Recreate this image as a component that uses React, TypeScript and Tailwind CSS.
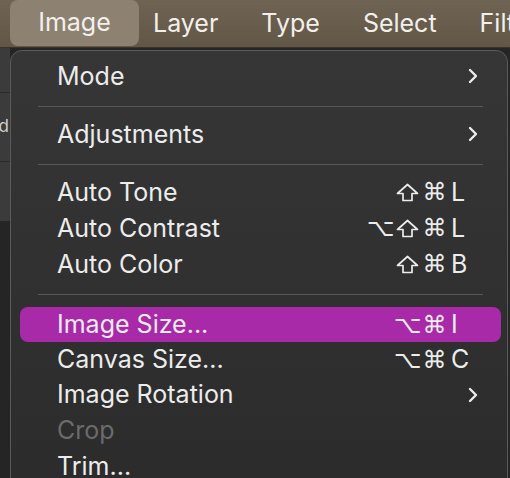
import React from "react";

type Row = {
  label?: string;
  mods?: string[];
  keyChar?: string;
  submenu?: boolean;
  disabled?: boolean;
  active?: boolean;
  sep?: boolean;
  h: string;
};

const rows: Row[] = [
  { label: "Mode", submenu: true, h: "h-[36px]" },
  { sep: true, h: "h-[22px]" },
  { label: "Adjustments", submenu: true, h: "h-[36px]" },
  { sep: true, h: "h-[22px]" },
  { label: "Auto Tone", mods: ["⇧", "⌘"], keyChar: "L", h: "h-[36px]" },
  { label: "Auto Contrast", mods: ["⌥", "⇧", "⌘"], keyChar: "L", h: "h-[36px]" },
  { label: "Auto Color", mods: ["⇧", "⌘"], keyChar: "B", h: "h-[36px]" },
  { sep: true, h: "h-[25px]" },
  { label: "Image Size...", mods: ["⌥", "⌘"], keyChar: "I", active: true, h: "h-[35px]" },
  { label: "Canvas Size...", mods: ["⌥", "⌘"], keyChar: "C", h: "h-[35px]" },
  { label: "Image Rotation", submenu: true, h: "h-[35px]" },
  { label: "Crop", disabled: true, h: "h-[36px]" },
  { label: "Trim...", h: "h-[36px]" },
];

function Chevron() {
  return (
    <svg width="10" height="16" viewBox="0 0 10 16" className="mr-[23px]">
      <path d="M2 2 L8 8 L2 14" fill="none" stroke="#ececec" strokeWidth="2.4" strokeLinecap="round" strokeLinejoin="round" />
    </svg>
  );
}

// shift key symbol, drawn wide like the macOS menu glyph
function ShiftIcon() {
  return (
    <svg width="23" height="19" viewBox="0 0 23 19">
      <path
        d="M11.5 1.5 L21.5 10.5 L16 10.5 L16 17.5 L7 17.5 L7 10.5 L1.5 10.5 Z"
        fill="none"
        stroke="#ececec"
        strokeWidth="1.7"
        strokeLinejoin="round"
      />
    </svg>
  );
}

function MenuRow({ row }: { row: Row }) {
  if (row.sep) {
    return (
      <div className={`${row.h} relative`}>
        <div className="absolute left-[27px] right-[24px] top-[12px] h-px bg-[#575757]" />
      </div>
    );
  }
  return (
    <div
      className={`${row.h} flex items-center ml-[9px] mr-[6px] pl-[37px] rounded-[8px] ${
        row.active ? "bg-[#a92aa8]" : ""
      }`}
    >
      <span className={`text-[25px] leading-none ${row.disabled ? "text-[#6b6b6b]" : "text-[#ececec]"}`}>
        {row.label}
      </span>
      {row.submenu && (
        <div className="ml-auto flex items-center">
          <Chevron />
        </div>
      )}
      {row.keyChar && (
        <div className="ml-auto mr-[28px] flex items-center text-[#ececec]">
          <div className="flex justify-end items-center">
            {row.mods?.map((m, i) => (
              <span key={i} className="w-[27px] flex justify-center text-[24px] leading-none font-['DejaVu_Sans',sans-serif]">
                {m === "⇧" ? <ShiftIcon /> : m}
              </span>
            ))}
          </div>
          <span className="ml-[3px] w-[22px] text-[25px] leading-none">{row.keyChar}</span>
        </div>
      )}
    </div>
  );
}

export default function App() {
  return (
    <div className="relative w-[510px] h-[478px] overflow-hidden bg-[#252525] font-['Inter',sans-serif]">
      {/* menu bar */}
      <div className="h-[48px] flex items-center pl-[10px] bg-gradient-to-b from-[#6f6353] to-[#625646] border-b border-[#3a3128] text-[25px] text-[#f3f0ec] whitespace-nowrap">
        <div className="shrink-0 w-[129px] h-[46px] mt-[-1px] flex items-center justify-center rounded-[8px] bg-[#8d8171]">
          Image
        </div>
        <span className="shrink-0 ml-[14px]">Layer</span>
        <span className="shrink-0 ml-[43px]">Type</span>
        <span className="shrink-0 ml-[43px]">Select</span>
        <span className="shrink-0 ml-[43px]">Filter</span>
      </div>

      {/* left panel peeking under the menu */}
      <div className="w-[10px] flex flex-col">
        <div className="h-[45px] bg-[#3b3b3b] border-b border-[#2b2b2b]" />
        <div className="h-[69px] bg-[#3b3b3b] border-b border-[#2b2b2b] flex items-center justify-end overflow-hidden">
          <span className="text-[17px] text-[#cfcfcf] mr-[1px]">d</span>
        </div>
        <div className="h-[59px] bg-[#3b3b3b]" />
      </div>

      {/* dropdown menu */}
      <div className="absolute left-[10px] top-[50px] w-[498px] h-[460px] rounded-[12px] border border-[#5a5a5a] bg-gradient-to-b from-[#363636] to-[#2b2b2b] pt-[7px]">
        {rows.map((r, i) => (
          <MenuRow key={i} row={r} />
        ))}
      </div>
    </div>
  );
}
